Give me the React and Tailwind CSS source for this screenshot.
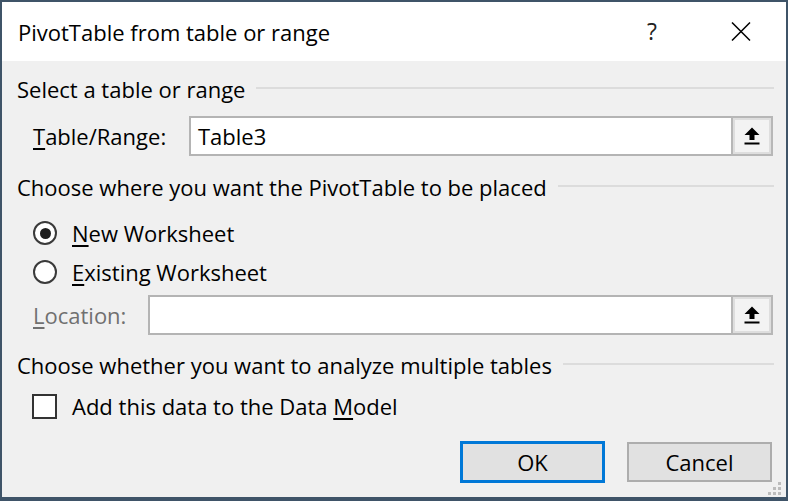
function Section({ title, className = "" }) {
  return (
    <div className={`flex items-center h-[24px] pl-[15px] pr-[12px] ${className}`}>
      <span className="whitespace-nowrap">{title}</span>
      <div className="flex-1 h-[2px] bg-[#dcdcdc] ml-[11px] -mt-[2px]" />
    </div>
  );
}

function PickButton() {
  return (
    <div className="w-[42px] h-full bg-[#b7b7b7] p-[2px] flex">
      <div className="flex-1 border-2 border-[#dedede] bg-[#f3f3f3] flex items-center justify-center">
        <svg width="16" height="18" viewBox="0 0 16 18">
          <path d="M8 0.5 L15.5 8 L10.5 8 L10.5 13 L5.5 13 L5.5 8 L0.5 8 Z" fill="#000" />
          <rect x="0.5" y="15.5" width="15" height="2" fill="#000" />
        </svg>
      </div>
    </div>
  );
}

function Field({ value }) {
  return (
    <div className="flex-1 h-[40px] border-2 border-[#b4b4b4] border-r-0 bg-white flex">
      <div className="flex-1 flex items-center pl-[7px]">{value}</div>
      <div className="-my-[2px]">
        <div className="h-[40px] flex">
          <PickButton />
        </div>
      </div>
    </div>
  );
}

function Radio({ checked, label }) {
  return (
    <div className="flex items-center h-[24px] pl-[31px]">
      <div className="w-[24px] h-[24px] rounded-full border-2 border-[#3a3a3a] bg-white flex items-center justify-center">
        {checked && <div className="w-[11px] h-[11px] rounded-full bg-[#1e1e1e]" />}
      </div>
      <span className="ml-[15px]">{label}</span>
    </div>
  );
}

export default function App() {
  return (
    <div
      className="w-[788px] h-[501px] bg-[#3f5468] pt-[2px] pl-[2px] pr-[2px] pb-[4px] flex flex-col text-[22px] text-black leading-none"
      style={{ fontFamily: '"Open Sans", "Noto Sans", Arial, sans-serif' }}
    >
      {/* Title bar */}
      <div className="h-[59px] bg-white flex items-center pl-[16px] pr-[35px]">
        <span className="flex-1">PivotTable from table or range</span>
        <span className="text-[23px] text-[#222] mr-[74px]">?</span>
        <svg width="20" height="19" viewBox="0 0 20 19">
          <path d="M1 0.5 L19 18.5 M19 0.5 L1 18.5" stroke="#000" strokeWidth="1.5" />
        </svg>
      </div>

      {/* Body */}
      <div className="relative flex-1 bg-[#f0f0f0] flex flex-col">
        <Section title="Select a table or range" className="mt-[16px]" />

        <div className="flex items-center h-[40px] mt-[15px] pl-[31px] pr-[13px]">
          <span className="w-[156px]">
            <span className="underline underline-offset-[3px]">T</span>able/Range:
          </span>
          <Field value="Table3" />
        </div>

        <Section title="Choose where you want the PivotTable to be placed" className="mt-[19px]" />

        <div className="mt-[22px]">
          <Radio checked label={<><span className="underline underline-offset-[3px]">N</span>ew Worksheet</>} />
        </div>
        <div className="mt-[15px]">
          <Radio label={<><span className="underline underline-offset-[3px]">E</span>xisting Worksheet</>} />
        </div>

        <div className="flex items-center h-[40px] mt-[11px] pl-[31px] pr-[13px]">
          <span className="w-[115px] text-[#707070]">
            <span className="underline underline-offset-[3px]">L</span>ocation:
          </span>
          <Field value="" />
        </div>

        <Section title="Choose whether you want to analyze multiple tables" className="mt-[18px]" />

        <div className="flex items-center h-[24px] mt-[17px] pl-[30px]">
          <div className="w-[25px] h-[25px] border-2 border-[#333] bg-white" />
          <span className="ml-[15px]">
            Add this data to the Data <span className="underline underline-offset-[3px]">M</span>odel
          </span>
        </div>

        <div className="flex items-center justify-end gap-[22px] mt-[23px] pr-[14px]">
          <button className="w-[145px] h-[42px] border-[3px] border-[#0078d7] bg-[#e1e1e1] flex items-center justify-center">
            OK
          </button>
          <button className="w-[145px] h-[40px] border-2 border-[#adadad] bg-[#e1e1e1] flex items-center justify-center">
            Cancel
          </button>
        </div>

        {/* resize grip */}
        <div className="absolute right-[4px] bottom-[1px] w-[14px] h-[14px]">
          <svg width="14" height="14" viewBox="0 0 14 14">
            {[
              [10, 0],
              [5, 5],
              [10, 5],
              [0, 10],
              [5, 10],
              [10, 10],
            ].map(([x, y]) => (
              <rect key={`${x}-${y}`} x={x} y={y} width="3" height="3" fill="#bcbcbc" />
            ))}
          </svg>
        </div>
      </div>
    </div>
  );
}
